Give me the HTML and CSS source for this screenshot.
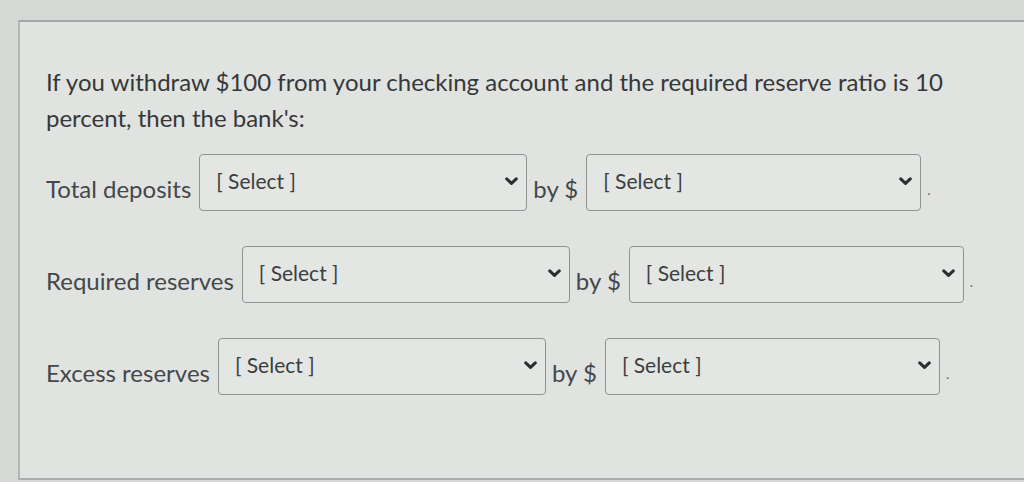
FILE: index.html
```html
<!DOCTYPE html>
<html lang="en">
<head>
<meta charset="utf-8">
<title>Question</title>
<link rel="stylesheet" href="styles.css">
</head>
<body>
<div class="panel">
  <p class="question">If you withdraw $100 from your checking account and the required reserve ratio is 10 percent, then the bank's:</p>

  <div class="row">
    <span class="label">Total deposits</span>
    <div class="select s1"><span>[ Select ]</span><svg class="chev" viewBox="0 0 12 8" width="13" height="9"><path d="M1.6 1.6 L6 5.8 L10.4 1.6" fill="none" stroke="#2c2f30" stroke-width="2.8" stroke-linecap="round" stroke-linejoin="round"/></svg></div>
    <span class="label by">by $</span>
    <div class="select s2"><span>[ Select ]</span><svg class="chev" viewBox="0 0 12 8" width="13" height="9"><path d="M1.6 1.6 L6 5.8 L10.4 1.6" fill="none" stroke="#2c2f30" stroke-width="2.8" stroke-linecap="round" stroke-linejoin="round"/></svg></div>
    <span class="dot">.</span>
  </div>

  <div class="row">
    <span class="label">Required reserves</span>
    <div class="select s1"><span>[ Select ]</span><svg class="chev" viewBox="0 0 12 8" width="13" height="9"><path d="M1.6 1.6 L6 5.8 L10.4 1.6" fill="none" stroke="#2c2f30" stroke-width="2.8" stroke-linecap="round" stroke-linejoin="round"/></svg></div>
    <span class="label by">by $</span>
    <div class="select s2"><span>[ Select ]</span><svg class="chev" viewBox="0 0 12 8" width="13" height="9"><path d="M1.6 1.6 L6 5.8 L10.4 1.6" fill="none" stroke="#2c2f30" stroke-width="2.8" stroke-linecap="round" stroke-linejoin="round"/></svg></div>
    <span class="dot">.</span>
  </div>

  <div class="row">
    <span class="label">Excess reserves</span>
    <div class="select s1"><span>[ Select ]</span><svg class="chev" viewBox="0 0 12 8" width="13" height="9"><path d="M1.6 1.6 L6 5.8 L10.4 1.6" fill="none" stroke="#2c2f30" stroke-width="2.8" stroke-linecap="round" stroke-linejoin="round"/></svg></div>
    <span class="label by">by $</span>
    <div class="select s2"><span>[ Select ]</span><svg class="chev" viewBox="0 0 12 8" width="13" height="9"><path d="M1.6 1.6 L6 5.8 L10.4 1.6" fill="none" stroke="#2c2f30" stroke-width="2.8" stroke-linecap="round" stroke-linejoin="round"/></svg></div>
    <span class="dot">.</span>
  </div>
</div>
</body>
</html>
```

FILE: styles.css
```css
html, body {
  margin: 0;
  padding: 0;
}
body {
  background: #d6d8d6;
  font-family: Lato, "Liberation Sans", sans-serif;
  color: #3b3e40;
  height: 482px;
  overflow: hidden;
}
.panel {
  margin: 20px 0 0 18px;
  height: 460px;
  background: #e1e3e1;
  border-top: 2px solid #a3a6a5;
  border-left: 2px solid #b3b6b5;
  border-bottom: 2px solid #a9acab;
  padding: 42px 0 0 26px;
  box-sizing: border-box;
}
.question {
  margin: 0;
  width: 920px;
  font-size: 24px;
  line-height: 36px;
  color: #353839;
}
.row {
  display: flex;
  align-items: center;
  margin-top: 18px;
  height: 57px;
}
.row + .row {
  margin-top: 35px;
}
.label {
  font-size: 24px;
  color: #44484a;
  margin-top: 12px;
  margin-right: 8px;
  white-space: nowrap;
}
.by {
  margin-left: 6px;
}
.select {
  box-sizing: border-box;
  height: 57px;
  border: 1.5px solid #8f9392;
  border-radius: 4px;
  background: #e4e6e4;
  display: flex;
  align-items: center;
  justify-content: space-between;
  padding: 0 8px 0 16px;
  font-size: 21px;
  color: #3b3e40;
}
.select span {
  margin-top: -4px;
}
.s1 { width: 328px; }
.s2 { width: 335px; }
.chev {
  display: block;
  margin-top: -2px;
}
.dot {
  margin-left: 6px;
  margin-top: 14px;
  font-size: 14px;
  color: #666;
}
```
